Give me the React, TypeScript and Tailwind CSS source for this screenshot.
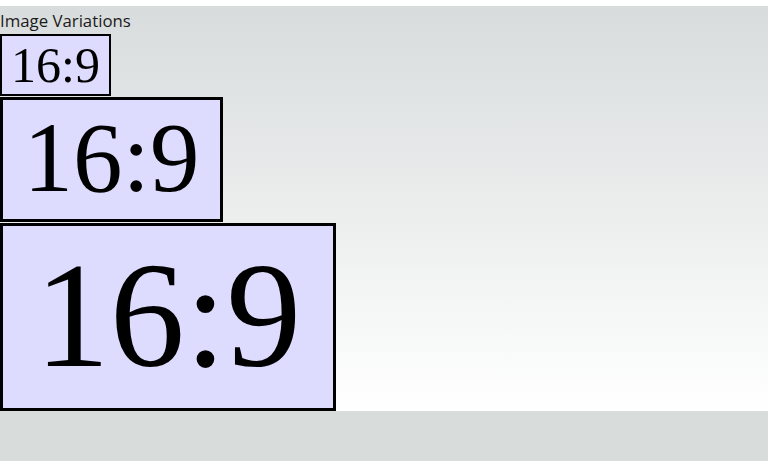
import React from 'react';

interface RatioBoxProps {
    label: string;
    className: string;
}

const RatioBox: React.FC<RatioBoxProps> = ({ label, className }) => (
    <div
        className={`flex items-center justify-center bg-[#dddcff] border-black text-black leading-none ${className}`}
        style={{ fontFamily: '"Liberation Serif", "Times New Roman", serif' }}
    >
        {label}
    </div>
);

export default function App() {
    return (
        <div className="w-[768px] h-[461px] bg-[#d8dcdb] overflow-hidden">
            <div className="h-[6px] bg-white" />
            <div className="bg-gradient-to-b from-[#d8dcdc] to-white">
                <div
                    className="h-[28px] pt-[4px] text-[16.8px] leading-[22px] text-[#1a1a1a]"
                    style={{ fontFamily: '"Open Sans", "Noto Sans", sans-serif' }}
                >
                    Image Variations
                </div>
                <div className="flex flex-col items-start gap-[1px]">
                    <RatioBox label="16:9" className="w-[111px] h-[62px] border-2 text-[50px]" />
                    <RatioBox label="16:9" className="w-[223px] h-[125px] border-[3px] pb-[4px] text-[99px]" />
                    <RatioBox label="16:9" className="w-[336px] h-[188px] border-[3px] pb-[4px] text-[150px]" />
                </div>
            </div>
        </div>
    );
}
